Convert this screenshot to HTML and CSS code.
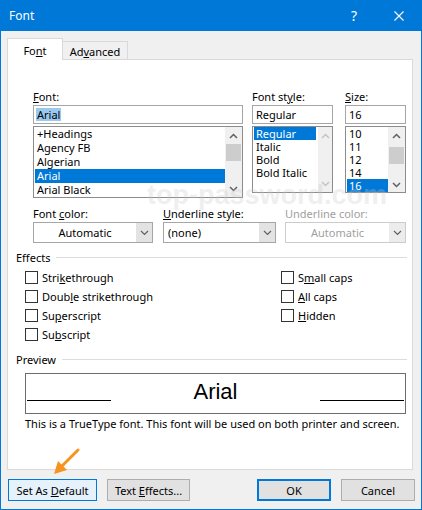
FILE: index.html
```html
<!DOCTYPE html>
<html lang="en">
<head>
    <meta charset="UTF-8">
    <meta name="viewport" content="width=device-width, initial-scale=1.0">
    <title>Font</title>
    <link rel="stylesheet" href="styles.css">
</head>
<body>
    <div class="window">
        <div class="titlebar">
            <span class="title">Font</span>
            <span class="help">?</span>
            <span class="close">
                <svg width="10" height="10" viewBox="0 0 10 10"><path d="M0.5 0.5 L9.5 9.5 M9.5 0.5 L0.5 9.5" stroke="#fff" stroke-width="1.1" fill="none"/></svg>
            </span>
        </div>
        <div class="content">
            <div class="tabs">
                <div class="tab active">Fo<u>n</u>t</div>
                <div class="tab">Ad<u>v</u>anced</div>
            </div>
            <div class="panel">
                <div class="pickers">
                    <div class="picker picker-font">
                        <div class="label"><u>F</u>ont:</div>
                        <div class="textbox"><span class="sel">Arial</span></div>
                        <div class="listbox tall">
                            <ul class="items">
                                <li>+Headings</li>
                                <li>Agency FB</li>
                                <li>Algerian</li>
                                <li class="selected">Arial</li>
                                <li>Arial Black</li>
                            </ul>
                            <div class="scrollbar">
                                <div class="scroll-btn"><svg width="9" height="6" viewBox="0 0 9 6"><path d="M1 5 L4.5 1.5 L8 5" fill="none" stroke="#606060" stroke-width="1.5"/></svg></div>
                                <div class="thumb"></div>
                                <div class="track"></div>
                                <div class="scroll-btn"><svg width="9" height="6" viewBox="0 0 9 6"><path d="M1 1 L4.5 4.5 L8 1" fill="none" stroke="#606060" stroke-width="1.5"/></svg></div>
                            </div>
                        </div>
                    </div>
                    <div class="picker picker-style">
                        <div class="label">Font st<u>y</u>le:</div>
                        <div class="textbox">Regular</div>
                        <div class="listbox">
                            <ul class="items gap">
                                <li class="selected">Regular</li>
                                <li>Italic</li>
                                <li>Bold</li>
                                <li>Bold Italic</li>
                            </ul>
                            <div class="scrollbar narrow">
                                <div class="scroll-btn"><svg width="9" height="6" viewBox="0 0 9 6"><path d="M1 5 L4.5 1.5 L8 5" fill="none" stroke="#c4c4c4" stroke-width="1.5"/></svg></div>
                                <div class="track"></div>
                                <div class="scroll-btn"><svg width="9" height="6" viewBox="0 0 9 6"><path d="M1 1 L4.5 4.5 L8 1" fill="none" stroke="#c4c4c4" stroke-width="1.5"/></svg></div>
                            </div>
                        </div>
                    </div>
                    <div class="picker picker-size">
                        <div class="label"><u>S</u>ize:</div>
                        <div class="textbox">16</div>
                        <div class="listbox">
                            <ul class="items">
                                <li>10</li>
                                <li>11</li>
                                <li>12</li>
                                <li>14</li>
                                <li class="selected">16</li>
                            </ul>
                            <div class="scrollbar">
                                <div class="scroll-btn"><svg width="9" height="6" viewBox="0 0 9 6"><path d="M1 5 L4.5 1.5 L8 5" fill="none" stroke="#606060" stroke-width="1.5"/></svg></div>
                                <div class="thumb lower"></div>
                                <div class="track"></div>
                                <div class="scroll-btn short"><svg width="9" height="6" viewBox="0 0 9 6"><path d="M1 1 L4.5 4.5 L8 1" fill="none" stroke="#606060" stroke-width="1.5"/></svg></div>
                            </div>
                        </div>
                    </div>
                </div>

                <div class="combos">
                    <div class="combo-col col-color">
                        <div class="label">Font <u>c</u>olor:</div>
                        <div class="combo">
                            <div class="combo-text center">Automatic</div>
                            <div class="combo-arrow"><svg width="9" height="6" viewBox="0 0 9 6"><path d="M1 1 L4.5 4.5 L8 1" fill="none" stroke="#606060" stroke-width="1.2"/></svg></div>
                        </div>
                    </div>
                    <div class="combo-col col-style">
                        <div class="label"><u>U</u>nderline style:</div>
                        <div class="combo">
                            <div class="combo-text">(none)</div>
                            <div class="combo-arrow"><svg width="9" height="6" viewBox="0 0 9 6"><path d="M1 1 L4.5 4.5 L8 1" fill="none" stroke="#606060" stroke-width="1.2"/></svg></div>
                        </div>
                    </div>
                    <div class="combo-col col-ucolor">
                        <div class="label disabled">Underline color:</div>
                        <div class="combo off">
                            <div class="combo-text center">Automatic</div>
                            <div class="combo-arrow"><svg width="9" height="6" viewBox="0 0 9 6"><path d="M1 1 L4.5 4.5 L8 1" fill="none" stroke="#606060" stroke-width="1.2"/></svg></div>
                        </div>
                    </div>
                </div>

                <div class="group-head">Effects</div>
                <div class="effects">
                    <label class="check"><span class="box"></span><span>Stri<u>k</u>ethrough</span></label>
                    <label class="check"><span class="box"></span><span>Doub<u>l</u>e strikethrough</span></label>
                    <label class="check"><span class="box"></span><span>Su<u>p</u>erscript</span></label>
                    <label class="check"><span class="box"></span><span>Su<u>b</u>script</span></label>
                    <label class="check"><span class="box"></span><span>S<u>m</u>all caps</span></label>
                    <label class="check"><span class="box"></span><span><u>A</u>ll caps</span></label>
                    <label class="check"><span class="box"></span><span><u>H</u>idden</span></label>
                </div>

                <div class="group-head preview-head">Preview</div>
                <div class="preview-box">
                    <div class="rule"></div>
                    <div class="sample">Arial</div>
                    <div class="rule"></div>
                </div>
                <p class="note">This is a TrueType font. This font will be used on both printer and screen.</p>

                <div class="watermark">top-password.com</div>
            </div>

            <div class="buttons">
                <button class="btn btn-default">Set As <u>D</u>efault</button>
                <button class="btn btn-effects">Text <u>E</u>ffects...</button>
                <button class="btn btn-ok">OK</button>
                <button class="btn btn-cancel">Cancel</button>
            </div>
        </div>

        <!-- callout pointing at the default button -->
        <svg class="callout" width="34" height="32" viewBox="0 0 34 32">
            <path d="M29 4 L13 20" stroke="#f7941d" stroke-width="3" fill="none" stroke-linecap="round"/>
            <polygon points="5,28 9,15 18,24" fill="#f7941d"/>
        </svg>
    </div>
</body>
</html>
```

FILE: styles.css
```css
* {
    box-sizing: border-box;
}
body {
    margin: 0;
    font-family: "Noto Sans", sans-serif;
    font-size: 11px;
    color: #000;
}
u {
    text-decoration-thickness: 1px;
    text-underline-offset: 1px;
}
.window {
    position: relative;
    width: 422px;
    height: 510px;
    background: #f0f0f0;
    border: 1px solid #0078d7;
    border-top: 0;
}
.titlebar {
    display: flex;
    align-items: center;
    height: 31px;
    background: #0078d7;
    color: #fff;
    padding-left: 8px;
}
.title {
    flex: 1;
    font-size: 12px;
}
.help {
    width: 46px;
    text-align: center;
    font-size: 14px;
}
.close {
    display: flex;
    justify-content: center;
    width: 44px;
}
.content {
    padding: 7px 0 0 6px;
}

/* tabs */
.tabs {
    display: flex;
    align-items: flex-end;
    height: 21px;
}
.tab {
    height: 18px;
    line-height: 17px;
    padding: 1px 0 0;
    text-align: center;
    border: 1px solid #d9d9d9;
    border-bottom: 0;
    width: 66px;
    margin-left: -1px;
}
.tab.active {
    position: relative;
    z-index: 1;
    width: 56px;
    height: 22px;
    margin: 0 0 -1px 0;
    padding-top: 3px;
    background: #fff;
}
.panel {
    position: relative;
    width: 406px;
    height: 411px;
    background: #fff;
    border: 1px solid #d9d9d9;
    padding: 0 5px 0 8px;
}

/* font / style / size pickers */
.pickers {
    display: flex;
    margin: 29px 0 0 17px;
}
.picker-font {
    width: 210px;
    margin-right: 9px;
}
.picker-style {
    width: 81px;
    margin-right: 12px;
}
.picker-size {
    width: 61px;
}
.label {
    height: 16px;
    line-height: 16px;
    white-space: nowrap;
}
.label.disabled {
    color: #a0a0a0;
}
.textbox {
    height: 19px;
    line-height: 17px;
    border: 1px solid #a6a6a6;
    padding-left: 3px;
}
.sel {
    display: inline-block;
    line-height: 13px;
    margin-left: -1px;
    padding: 0 1px;
    background: #99c9ef;
}
.listbox {
    display: flex;
    height: 67px;
    margin-top: 2px;
    border: 1px solid #8c8c8c;
}
.listbox.tall {
    height: 72px;
}
.items {
    flex: 1;
    list-style: none;
    margin: 0;
    padding: 0 0 0 1px;
}
.items li {
    height: 13px;
    line-height: 13px;
    padding-left: 2px;
}
.tall .items li {
    height: 14px;
    line-height: 14px;
}
.items.gap {
    margin-right: 2px;
}
.items li.selected {
    background: #0078d7;
    color: #fff;
}
.scrollbar {
    display: flex;
    flex-direction: column;
    width: 17px;
    background: #f0f0f0;
}
.scrollbar.narrow {
    width: 14px;
}
.scroll-btn {
    display: flex;
    align-items: center;
    justify-content: center;
    height: 17px;
}
.scroll-btn.short {
    height: 14px;
}
.thumb {
    height: 17px;
    margin: 0 1px;
    background: #cdcdcd;
}
.thumb.lower {
    margin-top: 3px;
}
.track {
    flex: 1;
}

/* colour and underline combos */
.combos {
    display: flex;
    margin: 8px 0 0 17px;
}
.col-color {
    width: 120px;
    margin-right: 10px;
}
.col-style {
    width: 113px;
    margin-right: 9px;
}
.col-ucolor {
    width: 121px;
}
.combo {
    display: flex;
    height: 21px;
    border: 1px solid #a6a6a6;
    background: #fff;
}
.combo.off {
    border-color: #cccccc;
    color: #a0a0a0;
}
.combo-text {
    flex: 1;
    line-height: 19px;
    padding-left: 4px;
}
.combo-text.center {
    text-align: center;
    padding-left: 0;
}
.combo-arrow {
    display: flex;
    align-items: center;
    justify-content: center;
    width: 16px;
    background: #e3e3e3;
}
.combo.off .combo-arrow {
    background: #ececec;
}

/* effects + preview groups */
.group-head {
    display: flex;
    align-items: center;
    height: 16px;
    margin-top: 6px;
}
.group-head::after {
    content: "";
    flex: 1;
    height: 1px;
    margin-left: 6px;
    background: #dcdcdc;
}
.preview-head {
    margin-top: 7px;
}
.effects {
    display: grid;
    grid-template-columns: 256px auto;
    grid-template-rows: repeat(4, 19px);
    grid-auto-flow: column;
    margin: 3px 0 0 9px;
}
.check {
    display: flex;
    align-items: center;
    gap: 4px;
}
.box {
    width: 13px;
    height: 13px;
    border: 1px solid #333;
    background: #fff;
}
.preview-box {
    display: flex;
    width: 381px;
    height: 41px;
    margin: 6px 0 0 9px;
    padding: 0 1px;
    border: 1px solid #6d6d6d;
}
.rule {
    width: 84px;
    height: 27px;
    border-bottom: 1px solid #000;
}
.sample {
    flex: 1;
    padding-top: 5px;
    text-align: center;
    font-family: "Liberation Sans", Arial, sans-serif;
    font-size: 22px;
    line-height: 26px;
}
.note {
    margin: 2px 0 0 9px;
    line-height: 16px;
    white-space: nowrap;
}
.watermark {
    position: absolute;
    left: 139px;
    top: 123px;
    font-family: "Liberation Sans", Arial, sans-serif;
    font-weight: bold;
    font-size: 27px;
    line-height: 24px;
    color: rgba(200, 200, 200, 0.3);
    pointer-events: none;
}

/* dialog buttons */
.buttons {
    display: flex;
    margin-top: 9px;
}
.btn {
    height: 22px;
    padding: 0;
    font: inherit;
    color: #000;
    background: #e1e1e1;
    border: 1px solid #adadad;
}
.btn-default {
    width: 89px;
    margin-left: 1px;
    background: #e5f1fb;
    border-color: #0078d7;
}
.btn-effects {
    width: 83px;
    margin-left: 10px;
}
.btn-ok {
    width: 74px;
    margin-left: 67px;
    border: 2px solid #0078d7;
}
.btn-cancel {
    width: 74px;
    margin-left: 10px;
}
.callout {
    position: absolute;
    left: 48px;
    top: 446px;
}
```
